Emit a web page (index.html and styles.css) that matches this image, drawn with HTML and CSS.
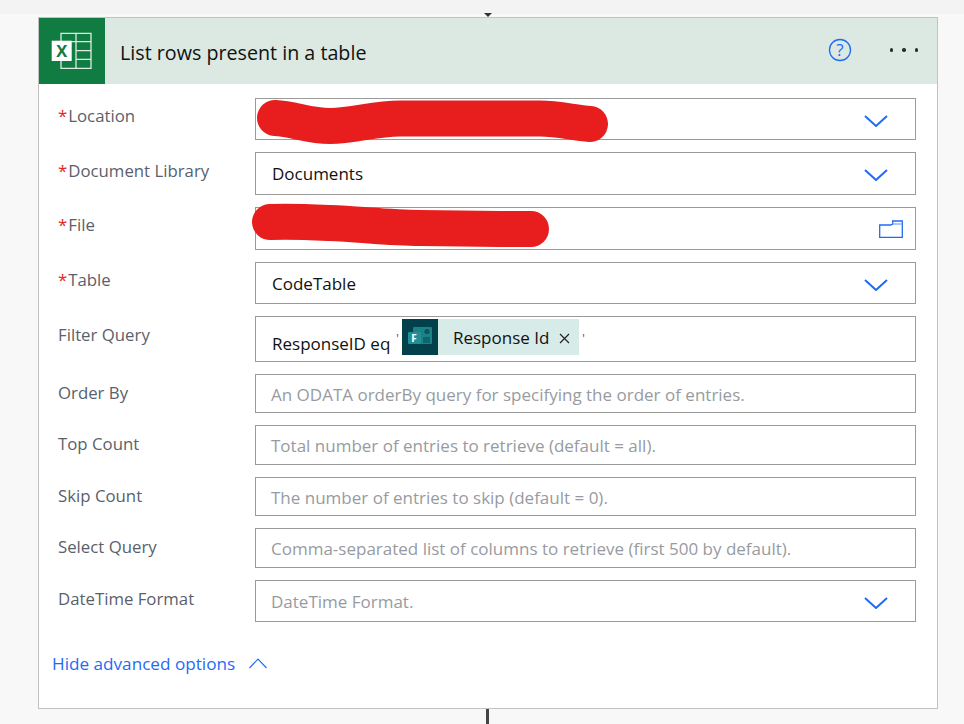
FILE: index.html
```html
<!DOCTYPE html>
<html lang="en">
<head>
<meta charset="utf-8">
<title>List rows present in a table</title>
<link rel="stylesheet" href="styles.css">
</head>
<body>
<div class="top-band"><svg class="arrow-tip" width="8" height="4" viewBox="0 0 8 4"><path d="M0 0h8L4 4z" fill="#333"/></svg></div>
<main class="card">
  <header class="head">
    <div class="logo">
      <svg width="42" height="38" viewBox="0 0 42 38" fill="none">
        <path d="M10 1.300h30v35H10z" stroke="#fff" stroke-width="1.300" opacity=".85"/>
        <path d="M25 1.300v35M10 9.700h30M25 18.700h15M25 27.300h15" stroke="#fff" stroke-width="1.300" opacity=".85"/>
        <rect x=".7" y="8.700" width="20" height="20.300" fill="#fff"/>
        <text x="10.700" y="25.300" class="logo-x">X</text>
      </svg>
    </div>
    <h1 class="title">List rows present in a table</h1>
    <svg class="help" width="24" height="24" viewBox="0 0 24 24" fill="none"><circle cx="12" cy="12" r="10.500" stroke="#1f6bf5" stroke-width="1.300"/><text x="12" y="18" class="help-q">?</text></svg>
    <div class="dots"><i></i><i></i><i></i></div>
  </header>
  <div class="form">
    <div class="row"><label class="lbl"><span class="req">*</span>Location</label><div class="box h42"><svg class="chev" viewBox="0 0 24 12"><path d="M1 1l11 10L23 1"/></svg></div></div>
    <div class="row"><label class="lbl lbl-low"><span class="req">*</span>Document Library</label><div class="box h43"><span class="val">Documents</span><svg class="chev" viewBox="0 0 24 12"><path d="M1 1l11 10L23 1"/></svg></div></div>
    <div class="row"><label class="lbl"><span class="req">*</span>File</label><div class="box h43"><svg class="folder" width="24" height="18" viewBox="0 0 24 18" fill="none"><path d="M.7 5h11l2-1V1h9.600v16.300H.7z" stroke="#1f6bf5" stroke-width="1.300"/><path d="M13.700 4h9.600" stroke="#7ea8f8" stroke-width="1.300"/></svg></div></div>
    <div class="row"><label class="lbl"><span class="req">*</span>Table</label><div class="box h42"><span class="val">CodeTable</span><svg class="chev" viewBox="0 0 24 12"><path d="M1 1l11 10L23 1"/></svg></div></div>
    <div class="row"><label class="lbl lbl-low">Filter Query</label><div class="box h46 query">
      <span class="val q-text">ResponseID eq</span><span class="tick">'</span>
      <span class="token">
        <span class="token-ico"><svg width="24" height="24" viewBox="0 0 24 24"><rect x="5" y="2" width="19" height="17" rx="1" fill="#1b8287"/><circle cx="19" cy="6.500" r="2.600" fill="#0d565c"/><rect x="15" y="12" width="7" height="6" fill="#0e666c"/><rect x="0" y="7" width="13" height="12" rx="1" fill="#1f9097"/><text x="3.300" y="17" class="token-f">F</text></svg></span>
        <span class="token-name">Response Id</span>
        <svg class="token-x" width="11" height="11" viewBox="0 0 11 11"><path d="M1 1l9 9M10 1l-9 9" stroke="#222" stroke-width="1.200"/></svg>
      </span><span class="tick tick-end">'</span>
    </div></div>
    <div class="row"><label class="lbl lbl-low">Order By</label><div class="box h39"><span class="ph">An ODATA orderBy query for specifying the order of entries.</span></div></div>
    <div class="row"><label class="lbl lbl-low">Top Count</label><div class="box h40"><span class="ph">Total number of entries to retrieve (default = all).</span></div></div>
    <div class="row"><label class="lbl lbl-low">Skip Count</label><div class="box h39"><span class="ph">The number of entries to skip (default = 0).</span></div></div>
    <div class="row"><label class="lbl lbl-low">Select Query</label><div class="box h40"><span class="ph">Comma-separated list of columns to retrieve (first 500 by default).</span></div></div>
    <div class="row"><label class="lbl lbl-low">DateTime Format</label><div class="box h42"><span class="ph">DateTime Format.</span><svg class="chev" viewBox="0 0 24 12"><path d="M1 1l11 10L23 1"/></svg></div></div>
  </div>
  <div class="adv"><span>Hide advanced options</span><svg width="20" height="11" viewBox="0 0 20 11" fill="none"><path d="M1.500 10l8.500-9 8.500 9" stroke="#1f6bf5" stroke-width="1.100"/></svg></div>
  <svg class="scribble" width="900" height="260" viewBox="0 0 900 260" fill="none">
    <path d="M236 100C255 101 270 108 291 108C315 108 335 100.500 361 100.500L501 100.500C520 100.500 535 105 551 106" stroke="#e81e1e" stroke-width="36" stroke-linecap="round" stroke-linejoin="round"/>
    <path d="M231 204C250 203 270 204 291 205C320 206 350 210 381 210L461 211C470 211 480 211 492 211" stroke="#e81e1e" stroke-width="36" stroke-linecap="round"/>
  </svg>
</main>
<div class="link-line"></div>
</body>
</html>
```
FILE: styles.css
```css
html, body { margin: 0; padding: 0; }
body {
  width: 964px;
  height: 724px;
  overflow: hidden;
  background: #f8f8f8;
  font-family: "Open Sans", "Noto Sans", sans-serif;
  color: #111;
}
.top-band { height: 14px; background: #f3f3f3; margin-bottom: 3px; position: relative; }
.arrow-tip { position: absolute; left: 484px; top: 13px; }
.card {
  position: relative;
  box-sizing: border-box;
  width: 900px;
  height: 692px;
  margin-left: 38px;
  border: 1px solid #c2c2c2;
  background: #fff;
}
.head { display: flex; align-items: center; height: 66px; background: #dbe9e2; }
.logo { width: 66px; height: 66px; background: #107c41; display: flex; align-items: center; justify-content: center; flex: none; }
.logo-x { font: 700 16.500px "Open Sans", sans-serif; fill: #107c41; text-anchor: middle; }
.title { margin: 3px 0 0 15px; flex: 1; font-weight: 400; font-size: 19.700px; color: #111; }
.help { margin: -2px 38px 0 0; }
.help-q { font: 400 17px "Open Sans", sans-serif; fill: #1f6bf5; text-anchor: middle; }
.dots { display: flex; gap: 9px; margin: -2px 19px 0 0; }
.dots i { width: 3.500px; height: 3.500px; border-radius: 50%; background: #2b2b2b; }
.form { display: flex; flex-direction: column; gap: 12px; padding: 14px 21px 0 19px; }
.row { display: flex; }
.lbl { width: 197px; flex: none; font-size: 16.800px; color: #5a5f6b; padding-top: 6px; line-height: 24px; }
.lbl-low { padding-top: 7px; }
.req { color: #e81e1e; margin-right: 1px; }
.box { flex: 1; box-sizing: border-box; border: 1px solid #9b9b9b; display: flex; align-items: center; padding: 0 15px 0 16px; position: relative; }
.h39 { height: 39px; } .h40 { height: 40px; } .h42 { height: 42px; } .h43 { height: 43px; } .h46 { height: 46px; }
.val { font-size: 17px; color: #111; }
.ph { font-size: 17px; color: #979ba1; margin: 1px 0 0 -1px; }
.chev { width: 24px; height: 12px; margin-left: auto; margin-top: 3px; margin-right: 12px; fill: none; stroke: #1f6bf5; stroke-width: 2; }
.folder { margin-left: auto; margin-right: -3px; }
.query { align-items: flex-start; }
.q-text { margin-top: 15px; }
.tick { color: #b2223c; font-size: 12px; margin: 15px 0 0 6px; line-height: 14px; }
.tick-end { margin-left: 3px; }
.token { display: flex; align-items: center; height: 36px; margin: 2px 0 0 3px; background: #d7ebe9; }
.token-ico { width: 36px; height: 36px; background: #02414b; display: flex; align-items: center; justify-content: center; }
.token-f { font: 700 10px "Open Sans", sans-serif; fill: #fff; }
.token-name { font-size: 17px; margin-left: 15px; color: #111; }
.token-x { margin: 3px 9px 0 10px; }
.adv { display: flex; align-items: center; gap: 13px; margin: 30px 0 0 13px; font-size: 17.150px; color: #1f6bf5; }
.scribble { position: absolute; left: 0; top: 0; pointer-events: none; }
.link-line { width: 3px; height: 15px; margin-left: 486px; background: #444; }
```
